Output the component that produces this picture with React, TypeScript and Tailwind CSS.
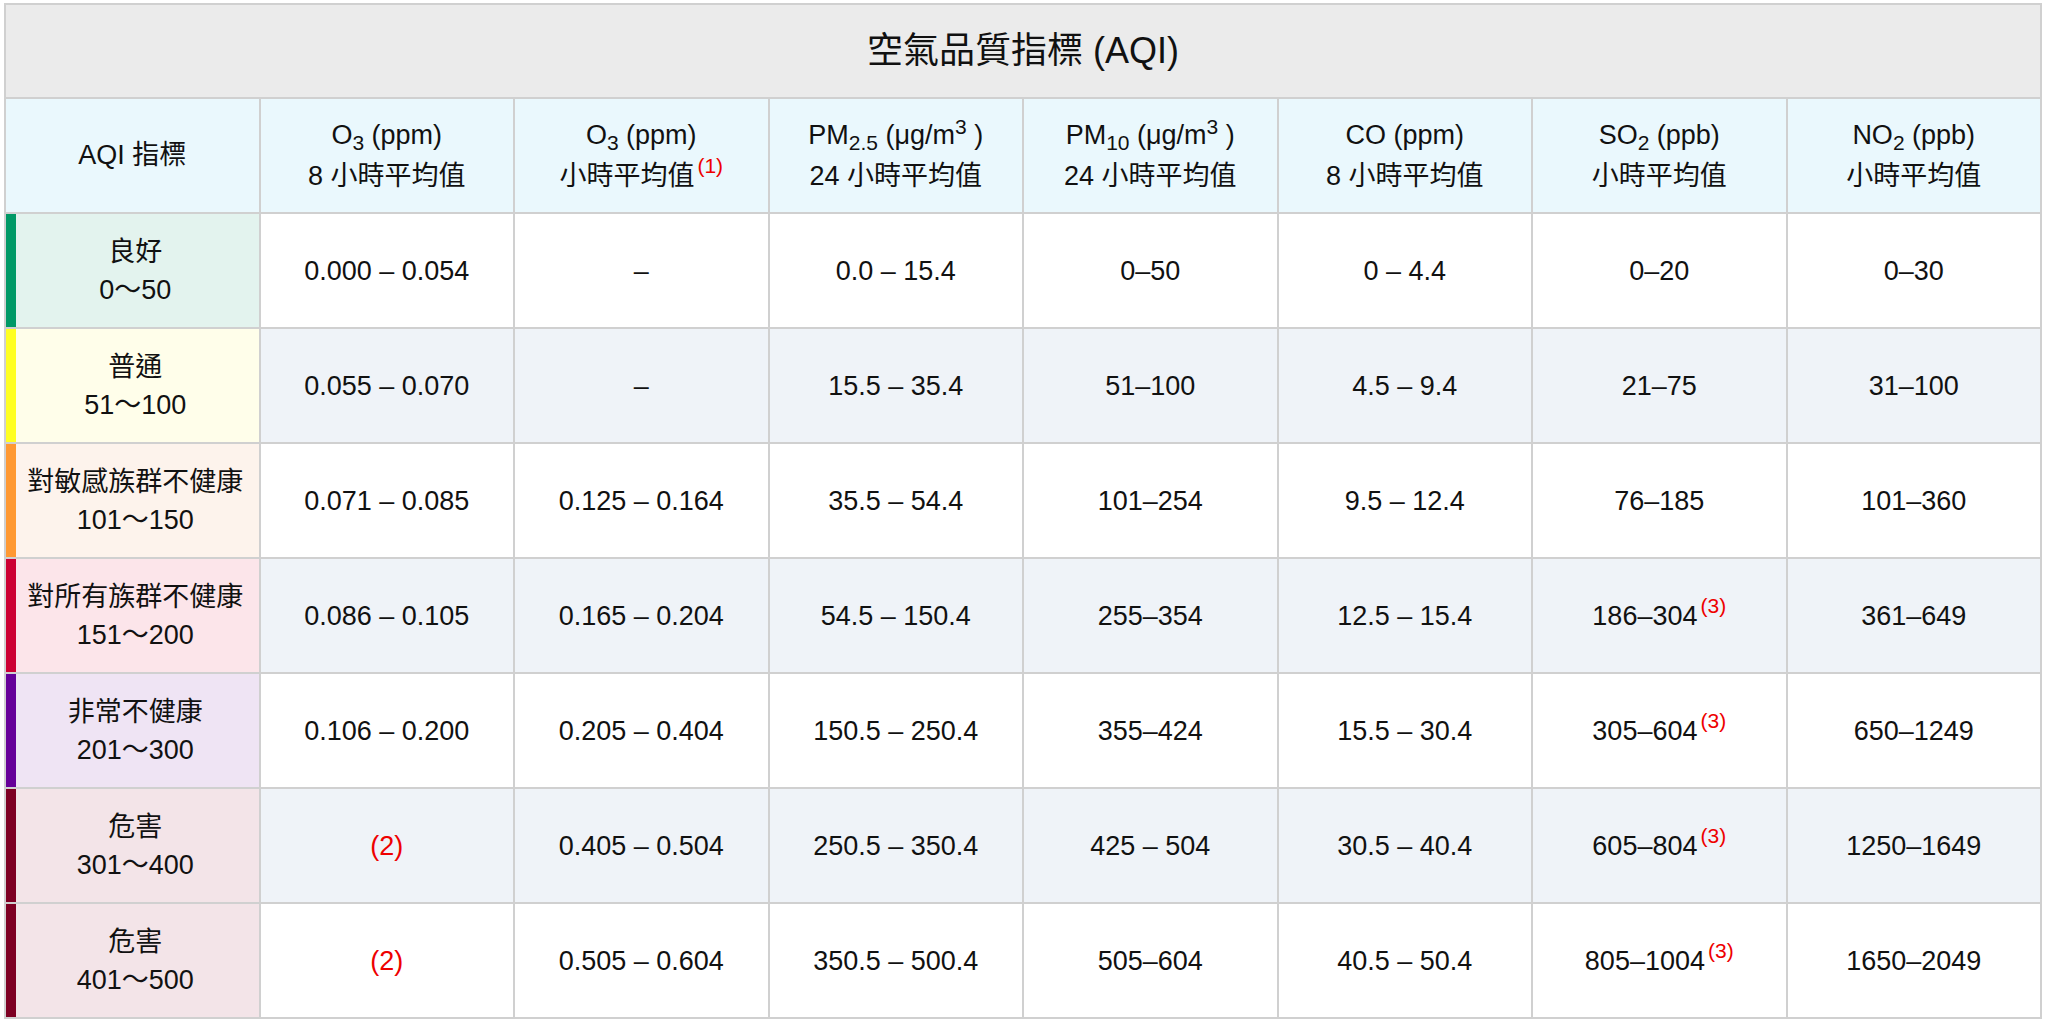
import React from "react";

type Level = {
  name: string;
  range: string;
  bar: string;
  bg: string;
};

const levels: Level[] = [
  { name: "良好", range: "0～50", bar: "shadow-[inset_10px_0_0_#009966]", bg: "bg-[#e3f3ee]" },
  { name: "普通", range: "51～100", bar: "shadow-[inset_10px_0_0_#ffff22]", bg: "bg-[#fffeea]" },
  { name: "對敏感族群不健康", range: "101～150", bar: "shadow-[inset_10px_0_0_#ff9933]", bg: "bg-[#fdf3ec]" },
  { name: "對所有族群不健康", range: "151～200", bar: "shadow-[inset_10px_0_0_#cc0033]", bg: "bg-[#fce5ea]" },
  { name: "非常不健康", range: "201～300", bar: "shadow-[inset_10px_0_0_#660099]", bg: "bg-[#efe4f4]" },
  { name: "危害", range: "301～400", bar: "shadow-[inset_10px_0_0_#7e0023]", bg: "bg-[#f3e4e8]" },
  { name: "危害", range: "401～500", bar: "shadow-[inset_10px_0_0_#7e0023]", bg: "bg-[#f3e4e8]" },
];

type Cell = { text: string; note?: string; red?: boolean };

const data: Cell[][] = [
  [{ text: "0.000 – 0.054" }, { text: "–" }, { text: "0.0 – 15.4" }, { text: "0–50" }, { text: "0 – 4.4" }, { text: "0–20" }, { text: "0–30" }],
  [{ text: "0.055 – 0.070" }, { text: "–" }, { text: "15.5 – 35.4" }, { text: "51–100" }, { text: "4.5 – 9.4" }, { text: "21–75" }, { text: "31–100" }],
  [{ text: "0.071 – 0.085" }, { text: "0.125 – 0.164" }, { text: "35.5 – 54.4" }, { text: "101–254" }, { text: "9.5 – 12.4" }, { text: "76–185" }, { text: "101–360" }],
  [{ text: "0.086 – 0.105" }, { text: "0.165 – 0.204" }, { text: "54.5 – 150.4" }, { text: "255–354" }, { text: "12.5 – 15.4" }, { text: "186–304", note: "(3)" }, { text: "361–649" }],
  [{ text: "0.106 – 0.200" }, { text: "0.205 – 0.404" }, { text: "150.5 – 250.4" }, { text: "355–424" }, { text: "15.5 – 30.4" }, { text: "305–604", note: "(3)" }, { text: "650–1249" }],
  [{ text: "(2)", red: true }, { text: "0.405 – 0.504" }, { text: "250.5 – 350.4" }, { text: "425 – 504" }, { text: "30.5 – 40.4" }, { text: "605–804", note: "(3)" }, { text: "1250–1649" }],
  [{ text: "(2)", red: true }, { text: "0.505 – 0.604" }, { text: "350.5 – 500.4" }, { text: "505–604" }, { text: "40.5 – 50.4" }, { text: "805–1004", note: "(3)" }, { text: "1650–2049" }],
];

const Sub = ({ children }: { children: React.ReactNode }) => (
  <sub className="text-[21px] relative -bottom-[6px]">{children}</sub>
);

const Sup = ({ children }: { children: React.ReactNode }) => (
  <sup className="text-[21px] text-[#ee0000] relative -top-[12px] ml-[3px]">{children}</sup>
);

export default function App() {
  const th = "border-2 border-[#d0d0d0] bg-[#eaf8fd] font-normal text-center align-middle leading-[41px] px-2";
  const td = "border-2 border-[#d0d0d0] text-center align-middle leading-[38px] px-2";
  return (
    <div
      className="bg-white min-h-screen pt-[3px] pl-[4px] text-[#111]"
      style={{ fontFamily: '"Liberation Sans", "Noto Sans CJK TC", sans-serif' }}
    >
      <table className="w-[2038px] table-fixed border-collapse text-[27px]">
        <thead>
          <tr className="h-[94px]">
            <th colSpan={8} className="border-2 border-[#d0d0d0] bg-[#ebebeb] font-normal text-[36px] text-center align-middle">
              空氣品質指標 (AQI)
            </th>
          </tr>
          <tr className="h-[115px]">
            <th className={th}>AQI 指標</th>
            <th className={th}>
              O<Sub>3</Sub> (ppm)
              <br />8 小時平均值
            </th>
            <th className={th}>
              O<Sub>3</Sub> (ppm)
              <br />小時平均值<Sup>(1)</Sup>
            </th>
            <th className={th}>
              PM<Sub>2.5</Sub> (μg/m<sup className="text-[21px] relative -top-[10px]">3</sup> )
              <br />24 小時平均值
            </th>
            <th className={th}>
              PM<Sub>10</Sub> (μg/m<sup className="text-[21px] relative -top-[10px]">3</sup> )
              <br />24 小時平均值
            </th>
            <th className={th}>
              CO (ppm)
              <br />8 小時平均值
            </th>
            <th className={th}>
              SO<Sub>2</Sub> (ppb)
              <br />小時平均值
            </th>
            <th className={th}>
              NO<Sub>2</Sub> (ppb)
              <br />小時平均值
            </th>
          </tr>
        </thead>
        <tbody>
          {levels.map((lv, i) => (
            <tr key={i} className={"h-[115px] " + (i % 2 === 1 ? "bg-[#eff3f8]" : "bg-white")}>
              <td className={td + " pl-[14px] " + lv.bg + " " + lv.bar}>
                {lv.name}
                <br />
                {lv.range}
              </td>
              {data[i].map((c, j) => (
                <td key={j} className={td}>
                  <span className={c.red ? "text-[#ee0000]" : ""}>{c.text}</span>
                  {c.note ? <Sup>{c.note}</Sup> : null}
                </td>
              ))}
            </tr>
          ))}
        </tbody>
      </table>
    </div>
  );
}
